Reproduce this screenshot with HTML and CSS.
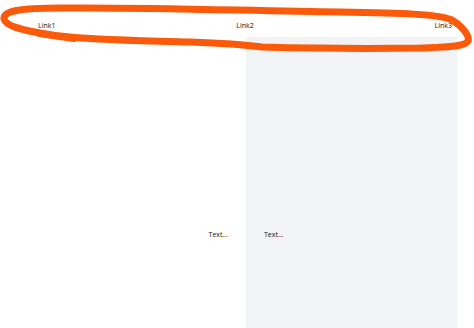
FILE: index.html
```html
<!DOCTYPE html>
<html>
<head>
<meta charset="utf-8">
<link rel="stylesheet" href="styles.css">
</head>
<body>
<div class="page">
  <nav class="nav">
    <a class="link">Link1</a>
    <a class="link">Link2</a>
    <a class="link">Link3</a>
  </nav>
  <main class="content">
    <div class="col-left"><span class="text">Text...</span></div>
    <div class="col-right"><span class="text">Text...</span></div>
    <div class="spacer"></div>
  </main>
  <svg class="scribble" width="474" height="60" viewBox="0 0 474 60">
    <path d="M40 33 C 25 30, 6 27, 4 19 C 3 11, 20 8, 60 8 C 150 7, 250 11, 340 12 C 400 13, 440 14, 452 20 C 462 26, 470 36, 468 41 C 465 47, 445 47, 420 48 C 360 49, 300 48, 262 47 C 240 44, 220 43, 190 42 C 150 41, 100 40, 70 37 C 55 36, 45 34, 40 33" fill="none" stroke="#fa5a0a" stroke-width="7" stroke-linecap="round" stroke-linejoin="round"/>
    <path d="M39 34 L 74 39" fill="none" stroke="#fa5a0a" stroke-width="6" stroke-linecap="round"/>
  </svg>
</div>
</body>
</html>
```
FILE: styles.css
```css
html, body {
  margin: 0;
  padding: 0;
  background: #ffffff;
}
.page {
  position: relative;
  width: 474px;
  height: 328px;
  overflow: hidden;
  font-family: "Open Sans", "Noto Sans", sans-serif;
  font-size: 7px;
  color: #111111;
}
.nav {
  display: flex;
  justify-content: space-between;
  padding: 21px 22px 0 38px;
  height: 16px;
  line-height: 10px;
}
.link {
  color: #111111;
  text-decoration: none;
}
.content {
  display: flex;
  height: 291px;
}
.col-left {
  width: 228px;
  padding-right: 18px;
  text-align: right;
  padding-top: 193px;
}
.col-right {
  width: 193px;
  padding-left: 18px;
  background: #f2f3f5;
  padding-top: 193px;
  box-shadow: 0 1px 3px rgba(0,0,0,0.03);
}
.spacer {
  flex: 1;
}
.text {
  line-height: 10px;
}
.scribble {
  position: absolute;
  left: 0;
  top: 0;
}
```
